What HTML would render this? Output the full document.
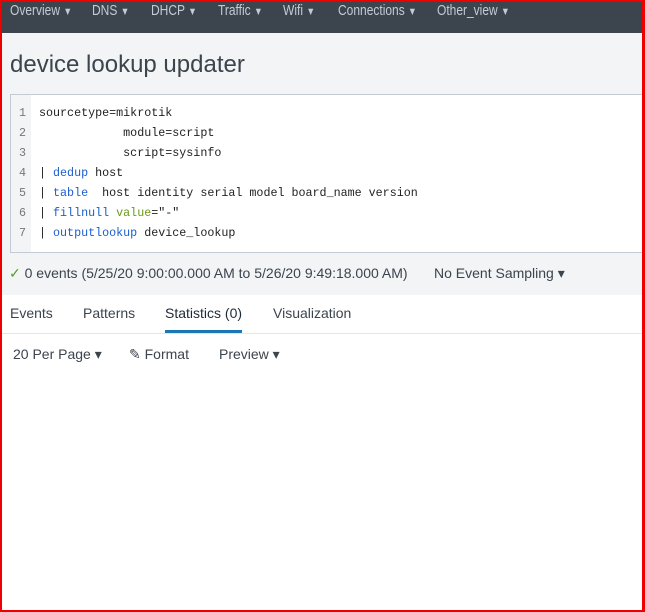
<!DOCTYPE html><html><head><style>
*{margin:0;padding:0;box-sizing:border-box}
body{width:645px;height:612px;overflow:hidden;background:#fff;font-family:"Liberation Sans",sans-serif;position:relative}
.frame{position:absolute;left:0;top:0;width:645px;height:612px;border:2px solid #e00;border-right-width:3px;z-index:10;pointer-events:none}
.nav{position:absolute;left:0;top:0;width:645px;height:33px;background:#3c444d;color:#c3cbd4;font-size:15px}
.nav span{position:absolute;top:2px;white-space:nowrap;transform:scaleX(0.8);transform-origin:left}
.nav i{font-style:normal;font-size:11px}
.gray{position:absolute;left:0;top:33px;width:645px;height:262px;background:#f2f4f6}
h1{position:absolute;left:10px;top:51px;font-size:24px;font-weight:normal;color:#3c444d}
.ed{position:absolute;left:10px;top:94px;width:635px;height:159px;background:#fff;border:1px solid #c3cbd4;border-right:none}
.gut{position:absolute;left:0;top:0;width:20px;height:100%;background:#f2f4f6}
.ln{position:absolute;left:8px;font:11.7px "Liberation Mono",monospace;color:#777}
.cd{position:absolute;left:28px;font:11.7px "Liberation Mono",monospace;color:#222;white-space:pre}
.b{color:#1a5fd0}.g{color:#6a9a14}
.st{position:absolute;top:265px;font-size:14px;color:#3c444d;white-space:nowrap}
.tab{position:absolute;top:305px;font-size:14px;color:#3c444d}
.line{position:absolute;left:0;top:333px;width:645px;height:1px;background:#e1e6eb}
.act{position:absolute;left:165px;top:330px;width:77px;height:3px;background:#1a78b4}
.tb{position:absolute;top:346px;font-size:14px;color:#3c444d;white-space:nowrap}
</style></head><body>
<div class="nav"><span style="left:10px">Overview <i>▼</i></span><span style="left:92px">DNS <i>▼</i></span><span style="left:151px">DHCP <i>▼</i></span><span style="left:218px">Traffic <i>▼</i></span><span style="left:283px">Wifi <i>▼</i></span><span style="left:338px">Connections <i>▼</i></span><span style="left:437px">Other_view <i>▼</i></span></div>
<div class="gray"></div>
<h1>device lookup updater</h1>
<div class="ed"><div class="gut"></div>
<div class="ln" style="top:11px">1</div><div class="ln" style="top:31px">2</div><div class="ln" style="top:51px">3</div><div class="ln" style="top:71px">4</div><div class="ln" style="top:91px">5</div><div class="ln" style="top:111px">6</div><div class="ln" style="top:131px">7</div>
<div class="cd" style="top:11px">sourcetype=mikrotik</div>
<div class="cd" style="top:31px">            module=script</div>
<div class="cd" style="top:51px">            script=sysinfo</div>
<div class="cd" style="top:71px">| <span class="b">dedup</span> host</div>
<div class="cd" style="top:91px">| <span class="b">table</span>  host identity serial model board_name version</div>
<div class="cd" style="top:111px">| <span class="b">fillnull</span> <span class="g">value</span>="-"</div>
<div class="cd" style="top:131px">| <span class="b">outputlookup</span> device_lookup</div>
</div>
<div class="st" style="left:9px"><span style="color:#5a9a2a">✓</span> 0 events (5/25/20 9:00:00.000 AM to 5/26/20 9:49:18.000 AM)</div>
<div class="st" style="left:434px">No Event Sampling ▾</div>
<div class="tab" style="left:10px">Events</div><div class="tab" style="left:83px">Patterns</div><div class="tab" style="left:165px;color:#1e2a36">Statistics (0)</div><div class="tab" style="left:273px">Visualization</div>
<div class="line"></div><div class="act"></div>
<div class="tb" style="left:13px">20 Per Page ▾</div><div class="tb" style="left:129px">✎ Format</div><div class="tb" style="left:219px">Preview ▾</div>
<div class="frame"></div>
</body></html>
